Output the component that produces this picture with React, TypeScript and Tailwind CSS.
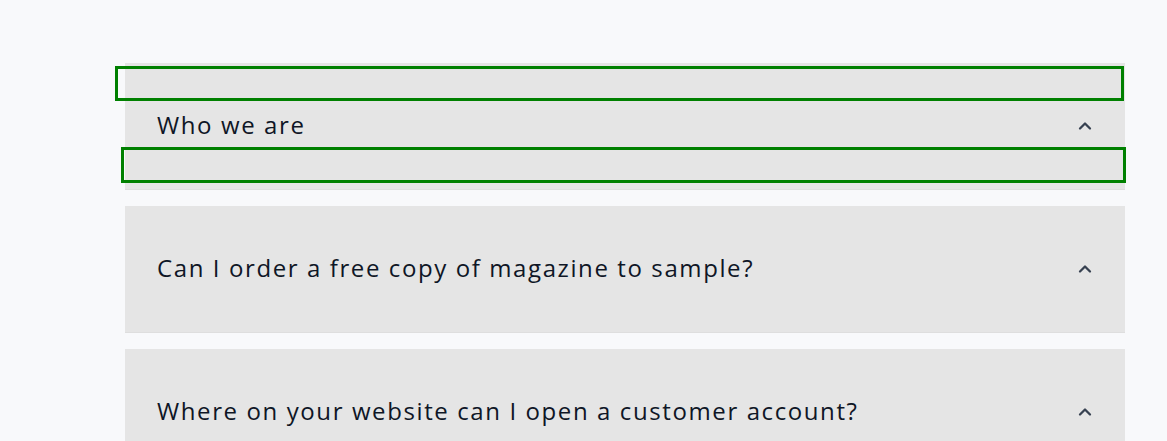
import { ChevronUp } from 'lucide-react';

const faqs = [
    'Who we are',
    'Can I order a free copy of magazine to sample?',
    'Where on your website can I open a customer account?',
];

export default function App() {
    return (
        <div className="relative min-h-[441px] bg-[#f8f9fb] pt-[63px] pl-[125px] font-['Open_Sans',sans-serif]">
            <div className="flex w-[1000px] flex-col gap-4">
                {faqs.map((q) => (
                    <div
                        key={q}
                        className="flex h-[127px] items-center justify-between border-b border-[#dedede] bg-[#e5e5e5] pl-8 pr-[30px]"
                    >
                        <span className="-mt-[2px] text-[24px] leading-none tracking-[1.6px] text-[#0f1626]">{q}</span>
                        <ChevronUp size={20} strokeWidth={2.75} className="text-[#374151]" />
                    </div>
                ))}
            </div>

            {/* debug outlines */}
            <div className="absolute left-[115px] top-[66px] h-[35px] w-[1009px] border-[3px] border-[#008000]" />
            <div className="absolute left-[121px] top-[147px] h-[36px] w-[1005px] border-[3px] border-[#008000]" />
        </div>
    );
}
